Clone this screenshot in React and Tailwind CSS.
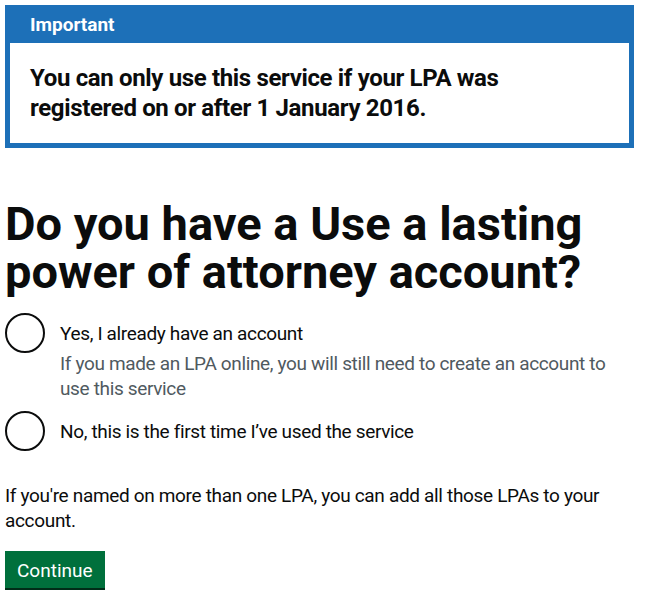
export default function App() {
  return (
    <div className="w-[634px] pl-[5px] pt-[5px] pb-[6px] font-[Roboto,sans-serif] text-[#0b0c0c] bg-white">
      <div className="border-[5px] border-[#1d70b8] bg-[#1d70b8] mb-[52px]">
        <div className="px-[20px] pt-[2px] pb-[6px]">
          <h2 className="text-[19px] leading-[25px] font-bold text-white">Important</h2>
        </div>
        <div className="bg-white p-[20px]">
          <p className="text-[24px] leading-[30px] font-bold max-w-[540px] tracking-[-0.35px]">
            You can only use this service if your LPA was registered on or after 1 January 2016.
          </p>
        </div>
      </div>

      <h1 className="text-[47px] leading-[48px] font-bold mb-[17px]">
        Do you have a Use a lasting power of attorney account?
      </h1>

      <div className="flex flex-col gap-[10px] mb-[32px] tracking-[-0.35px]">
        <div className="flex items-start">
          <span className="w-10 h-10 rounded-full border-2 border-[#0b0c0c] shrink-0" />
          <div className="px-[15px]">
            <div className="pt-[8px] pb-[5px] text-[19px] leading-[25px]">Yes, I already have an account</div>
            <div className="text-[19px] leading-[25px] text-[#505a5f]">
              If you made an LPA online, you will still need to create an account to use this service
            </div>
          </div>
        </div>
        <div className="flex items-start">
          <span className="w-10 h-10 rounded-full border-2 border-[#0b0c0c] shrink-0" />
          <div className="px-[15px]">
            <div className="pt-[8px] pb-[5px] text-[19px] leading-[25px]">No, this is the first time I’ve used the service</div>
          </div>
        </div>
      </div>

      <p className="text-[19px] leading-[25px] mb-[18px] tracking-[-0.33px]">
        If you're named on more than one LPA, you can add all those LPAs to your account.
      </p>

      <button className="bg-[#00703c] text-white text-[19px] leading-[19px] border-2 border-transparent pt-[8px] pb-[6px] px-[10px] shadow-[0_2px_0_#002d18]">
        Continue
      </button>
    </div>
  );
}
